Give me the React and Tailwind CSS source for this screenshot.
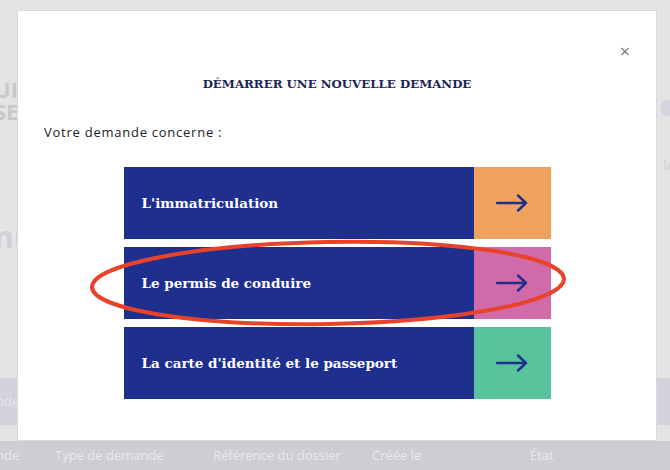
import React from "react";

const choices = [
  { label: "L'immatriculation", accent: "bg-[#efa25e]" },
  { label: "Le permis de conduire", accent: "bg-[#d06aa9]" },
  { label: "La carte d'identité et le passeport", accent: "bg-[#58c39b]" },
];

const Arrow = () => (
  <svg width="32" height="18" viewBox="0 0 32 18" fill="none">
    <path d="M1 9H30M22 1.5L30 9L22 16.5" stroke="#1f2f8e" strokeWidth="2.4" strokeLinecap="round" strokeLinejoin="round" />
  </svg>
);

const App = () => {
  return (
    <div className="relative w-[670px] h-[470px] overflow-hidden bg-[#e4e4e4]" style={{ fontFamily: "'Open Sans', sans-serif" }}>
      {/* page behind the overlay */}
      <div className="flex flex-col h-full">
        <div className="flex justify-between h-[378px]">
          <div className="flex flex-col pt-[78px] -ml-[6px]">
            <span className="text-[22px] font-bold leading-[22px] text-[#c9c9cc]">UI</span>
            <span className="text-[22px] font-bold leading-[22px] text-[#c9c9cc]">SE</span>
            <span className="mt-[100px] text-[30px] font-bold leading-[30px] text-[#cfd0da]">nu</span>
          </div>
          <div className="flex flex-col pt-[100px] items-end">
            <div className="w-[16px] h-[16px] rounded-full bg-[#d4d5de] -mr-[6px]"></div>
            <span className="mt-[40px] text-[13px] text-[#d0d0d6] -mr-[4px]">le</span>
          </div>
        </div>
        <div className="h-[47px] bg-[#d2d3dd] flex items-center -ml-[4px]">
          <span className="text-[13px] text-[#e6e6ee]">nde</span>
        </div>
        <div className="h-[16px]"></div>
        <div className="flex-1 bg-[#cdced3] flex items-center text-[13px] text-[#e9e9ee]">
          <span className="-ml-[4px] w-[59px]">nde</span>
          <span className="w-[158px]">Type de demande</span>
          <span className="w-[159px]">Référence du dossier</span>
          <span className="w-[158px]">Créée le</span>
          <span>État</span>
        </div>
      </div>

      {/* modal */}
      <div className="absolute left-[17px] top-[10px] w-[640px] h-[431px] bg-white border border-[#d9d9d9] pt-[63px] px-[26px]">
        <button className="absolute right-[26px] top-[31px] text-[#7a7a7a] text-[18px] leading-none">×</button>
        <h2 className="text-center text-[11.8px] font-bold leading-[20px] text-[#1c2457]" style={{ fontFamily: "'DejaVu Serif', serif" }}>
          DÉMARRER UNE NOUVELLE DEMANDE
        </h2>
        <p className="mt-[28px] text-[13px] leading-[20px] text-[#222] tracking-[0.75px]">Votre demande concerne :</p>
        <div className="mt-[25px] flex flex-col items-center gap-[8px]">
          {choices.map((c) => (
            <div key={c.label} className="flex w-[427px] h-[72px]">
              <div className="w-[350px] bg-[#1f2f8e] flex items-center pl-[18px] text-white text-[13.5px] font-bold" style={{ fontFamily: "'DejaVu Serif', serif" }}>
                {c.label}
              </div>
              <div className={`flex-1 ${c.accent} flex items-center justify-center`}>
                <Arrow />
              </div>
            </div>
          ))}
        </div>
      </div>

      {/* red highlight circle */}
      <svg className="absolute left-0 top-0 pointer-events-none" width="670" height="470" viewBox="0 0 670 470">
        <ellipse cx="328" cy="283" rx="236" ry="41" transform="rotate(-1 328 283)" fill="none" stroke="#e8432a" strokeWidth="4" />
      </svg>
    </div>
  );
};

export default App;
